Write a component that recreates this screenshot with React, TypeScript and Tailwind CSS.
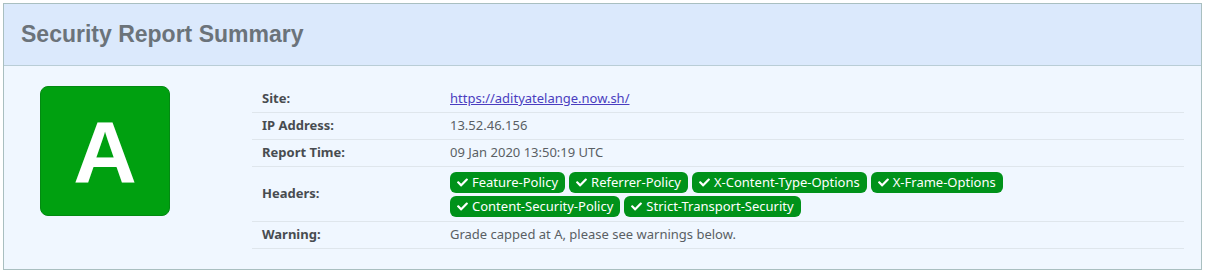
import React from 'react'

const headers = [
    'Feature-Policy',
    'Referrer-Policy',
    'X-Content-Type-Options',
    'X-Frame-Options',
    'Content-Security-Policy',
    'Strict-Transport-Security',
]

function Check() {
    return (
        <svg viewBox="0 0 512 512" className="w-[11px] h-[11px] fill-white shrink-0">
            <path d="M173.898 439.404l-166.4-166.4c-9.997-9.997-9.997-26.206 0-36.204l36.203-36.204c9.997-9.998 26.207-9.998 36.204 0L192 312.69 432.095 72.596c9.997-9.997 26.207-9.997 36.204 0l36.203 36.204c9.997 9.997 9.997 26.206 0 36.204l-294.4 294.401c-9.998 9.997-26.207 9.997-36.204-.001z" />
        </svg>
    )
}

function Row({ label, children, tall }: { label: string, children: React.ReactNode, tall?: boolean }) {
    return (
        <div className={`flex items-center border-b border-[#dfe6ec] ${tall ? 'h-[55px]' : 'h-[27px]'}`}>
            <div className="w-[198px] pl-[10px] font-bold text-[#484c50]">{label}</div>
            <div className="flex-1 text-[#5a5f64]">{children}</div>
        </div>
    )
}

export default function App() {
    return (
        <div className="w-[1207px] h-[274px] bg-white pt-[3px] pl-[3px] pr-[5px]">
            <div className="border border-[#a9bfc0] bg-[#f0f7ff] h-[267px]">
                <div className="h-[62px] bg-[#dbe9fc] border-b border-[#b9cdd6] flex items-center px-[17px]">
                    <h1 className="text-[23px] font-bold text-[#6b737a] leading-none" style={{ fontFamily: '"Liberation Sans", Arial, sans-serif' }}>
                        Security Report Summary
                    </h1>
                </div>

                <div className="flex pl-[36px] pr-[17px] pt-[20px]" style={{ fontFamily: '"Noto Sans", sans-serif' }}>
                    <div className="w-[130px] h-[130px] shrink-0 rounded-[8px] bg-[#00a010] border border-[#038a12] flex items-center justify-center">
                        <span className="text-white font-bold text-[88px] leading-none pt-[2px]" style={{ fontFamily: '"Liberation Sans", Arial, sans-serif' }}>A</span>
                    </div>

                    <div className="flex-1 ml-[82px] text-[13px]">
                        <Row label="Site:">
                            <a href="#" className="underline text-[#4a3dc0]">https://adityatelange.now.sh/</a>
                        </Row>
                        <Row label="IP Address:">13.52.46.156</Row>
                        <Row label="Report Time:">09 Jan 2020 13:50:19 UTC</Row>
                        <Row label="Headers:" tall>
                            <div className="flex flex-wrap gap-x-[4px] gap-y-[3px] pt-[1px] max-w-[640px]">
                                {headers.map(h => (
                                    <span key={h} className="inline-flex items-center gap-[4px] h-[21px] pl-[7px] pr-[7px] rounded-[6px] bg-[#00921a] text-white leading-none">
                                        <Check />
                                        {h}
                                    </span>
                                ))}
                            </div>
                        </Row>
                        <Row label="Warning:">Grade capped at A, please see warnings below.</Row>
                    </div>
                </div>
            </div>
        </div>
    )
}
